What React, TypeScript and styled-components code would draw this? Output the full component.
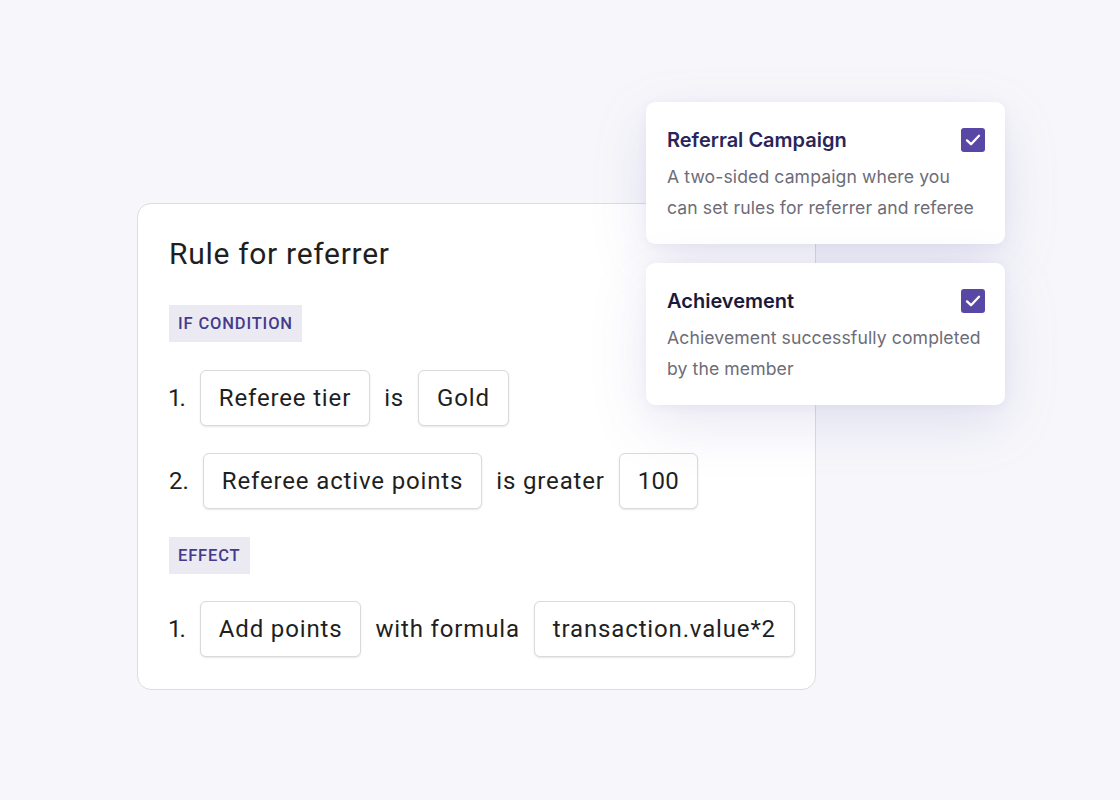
import React from "react";
import styled, { createGlobalStyle } from "styled-components";

const Global = createGlobalStyle`
  html, body { margin: 0; padding: 0; background: #f7f7fb; }
  body { width: 1120px; height: 800px; overflow: hidden; }
  * { box-sizing: border-box; }
`;

const Stage = styled.div`
  position: relative;
  width: 1120px;
  height: 800px;
  padding: 203px 0 0 137px;
`;

const RuleCard = styled.section`
  width: 679px;
  background: #ffffff;
  border: 1px solid #dcdce2;
  border-radius: 14px;
  padding: 28px 31px 32px 31px;
  font-family: Roboto, "Liberation Sans", sans-serif;
  color: #1f1f22;
  display: flex;
  flex-direction: column;
`;

const Title = styled.h1`
  margin: 0;
  font-size: 30px;
  font-weight: 400;
  line-height: 44px;
  letter-spacing: 0.7px;
  color: #1f1f22;
`;

const Label = styled.div<{ $top: number }>`
  align-self: flex-start;
  margin-top: ${(p) => p.$top}px;
  height: 37px;
  padding: 0 9px;
  display: flex;
  align-items: center;
  background: #ebeaf3;
  color: #463a8c;
  font-size: 16.5px;
  font-weight: 500;
  letter-spacing: 0.85px;
`;

const Row = styled.div<{ $top: number }>`
  margin-top: ${(p) => p.$top}px;
  display: flex;
  align-items: center;
  gap: 14px;
  font-size: 24px;
  letter-spacing: 0.85px;
  height: 56px;
  white-space: nowrap;
  & > * { flex-shrink: 0; }
`;

const Num = styled.span`
  font-variant-numeric: proportional-nums;
  letter-spacing: 0;
`;

const Chip = styled.span<{ $num?: boolean }>`
  height: 56px;
  display: inline-flex;
  align-items: center;
  padding: 0 18px;
  border: 1px solid #d9d9de;
  border-radius: 6px;
  background: #fff;
  box-shadow: 0 1px 2px rgba(0, 0, 0, 0.1);
  letter-spacing: ${(p) => (p.$num ? "0.2px" : "inherit")};
`;

const Word = styled.span``;

const Stack = styled.div`
  position: absolute;
  left: 646px;
  top: 102px;
  width: 359px;
  display: flex;
  flex-direction: column;
  gap: 19px;
  font-family: Inter, "Liberation Sans", sans-serif;
`;

const Pop = styled.div`
  height: 142px;
  background: #ffffff;
  border-radius: 9px;
  padding: 24px 20px 0 21px;
  box-shadow: 0 18px 56px rgba(92, 84, 170, 0.15), 0 2px 10px rgba(92, 84, 170, 0.06);
`;

const PopHead = styled.div`
  display: flex;
  justify-content: space-between;
  align-items: center;
  height: 28px;
`;

const PopTitle = styled.div<{ $dark?: boolean }>`
  font-size: 20px;
  font-weight: 600;
  color: ${(p) => (p.$dark ? "#1c1938" : "#2a2558")};
`;

const Check = styled.span`
  width: 24px;
  height: 24px;
  border-radius: 3px;
  background: #5947a6;
  display: inline-flex;
  align-items: center;
  justify-content: center;
`;

const PopText = styled.p`
  margin: 7px 0 0;
  font-size: 17.6px;
  line-height: 31px;
  color: #6d6c78;
  letter-spacing: 0.1px;
`;

const CheckBox = () => (
  <Check>
    <svg width="18" height="18" viewBox="0 0 18 18" fill="none">
      <path d="M3 9.4 L7 13.2 L15 4.8" stroke="#fff" strokeWidth="2.3" strokeLinecap="round" strokeLinejoin="round" />
    </svg>
  </Check>
);

export default function App() {
  return (
    <>
      <Global />
      <Stage>
        <RuleCard>
          <Title>Rule for referrer</Title>
          <Label $top={29}>IF CONDITION</Label>
          <Row $top={28}>
            <Num>1.</Num>
            <Chip>Referee tier</Chip>
            <Word>is</Word>
            <Chip>Gold</Chip>
          </Row>
          <Row $top={27}>
            <Num>2.</Num>
            <Chip>Referee active points</Chip>
            <Word>is greater</Word>
            <Chip $num>100</Chip>
          </Row>
          <Label $top={28}>EFFECT</Label>
          <Row $top={27}>
            <Num>1.</Num>
            <Chip>Add points</Chip>
            <Word>with formula</Word>
            <Chip>transaction.value*2</Chip>
          </Row>
        </RuleCard>
        <Stack>
          <Pop>
            <PopHead>
              <PopTitle>Referral Campaign</PopTitle>
              <CheckBox />
            </PopHead>
            <PopText>
              A two-sided campaign where you
              <br />
              can set rules for referrer and referee
            </PopText>
          </Pop>
          <Pop>
            <PopHead>
              <PopTitle $dark>Achievement</PopTitle>
              <CheckBox />
            </PopHead>
            <PopText>
              Achievement successfully completed
              <br />
              by the member
            </PopText>
          </Pop>
        </Stack>
      </Stage>
    </>
  );
}
